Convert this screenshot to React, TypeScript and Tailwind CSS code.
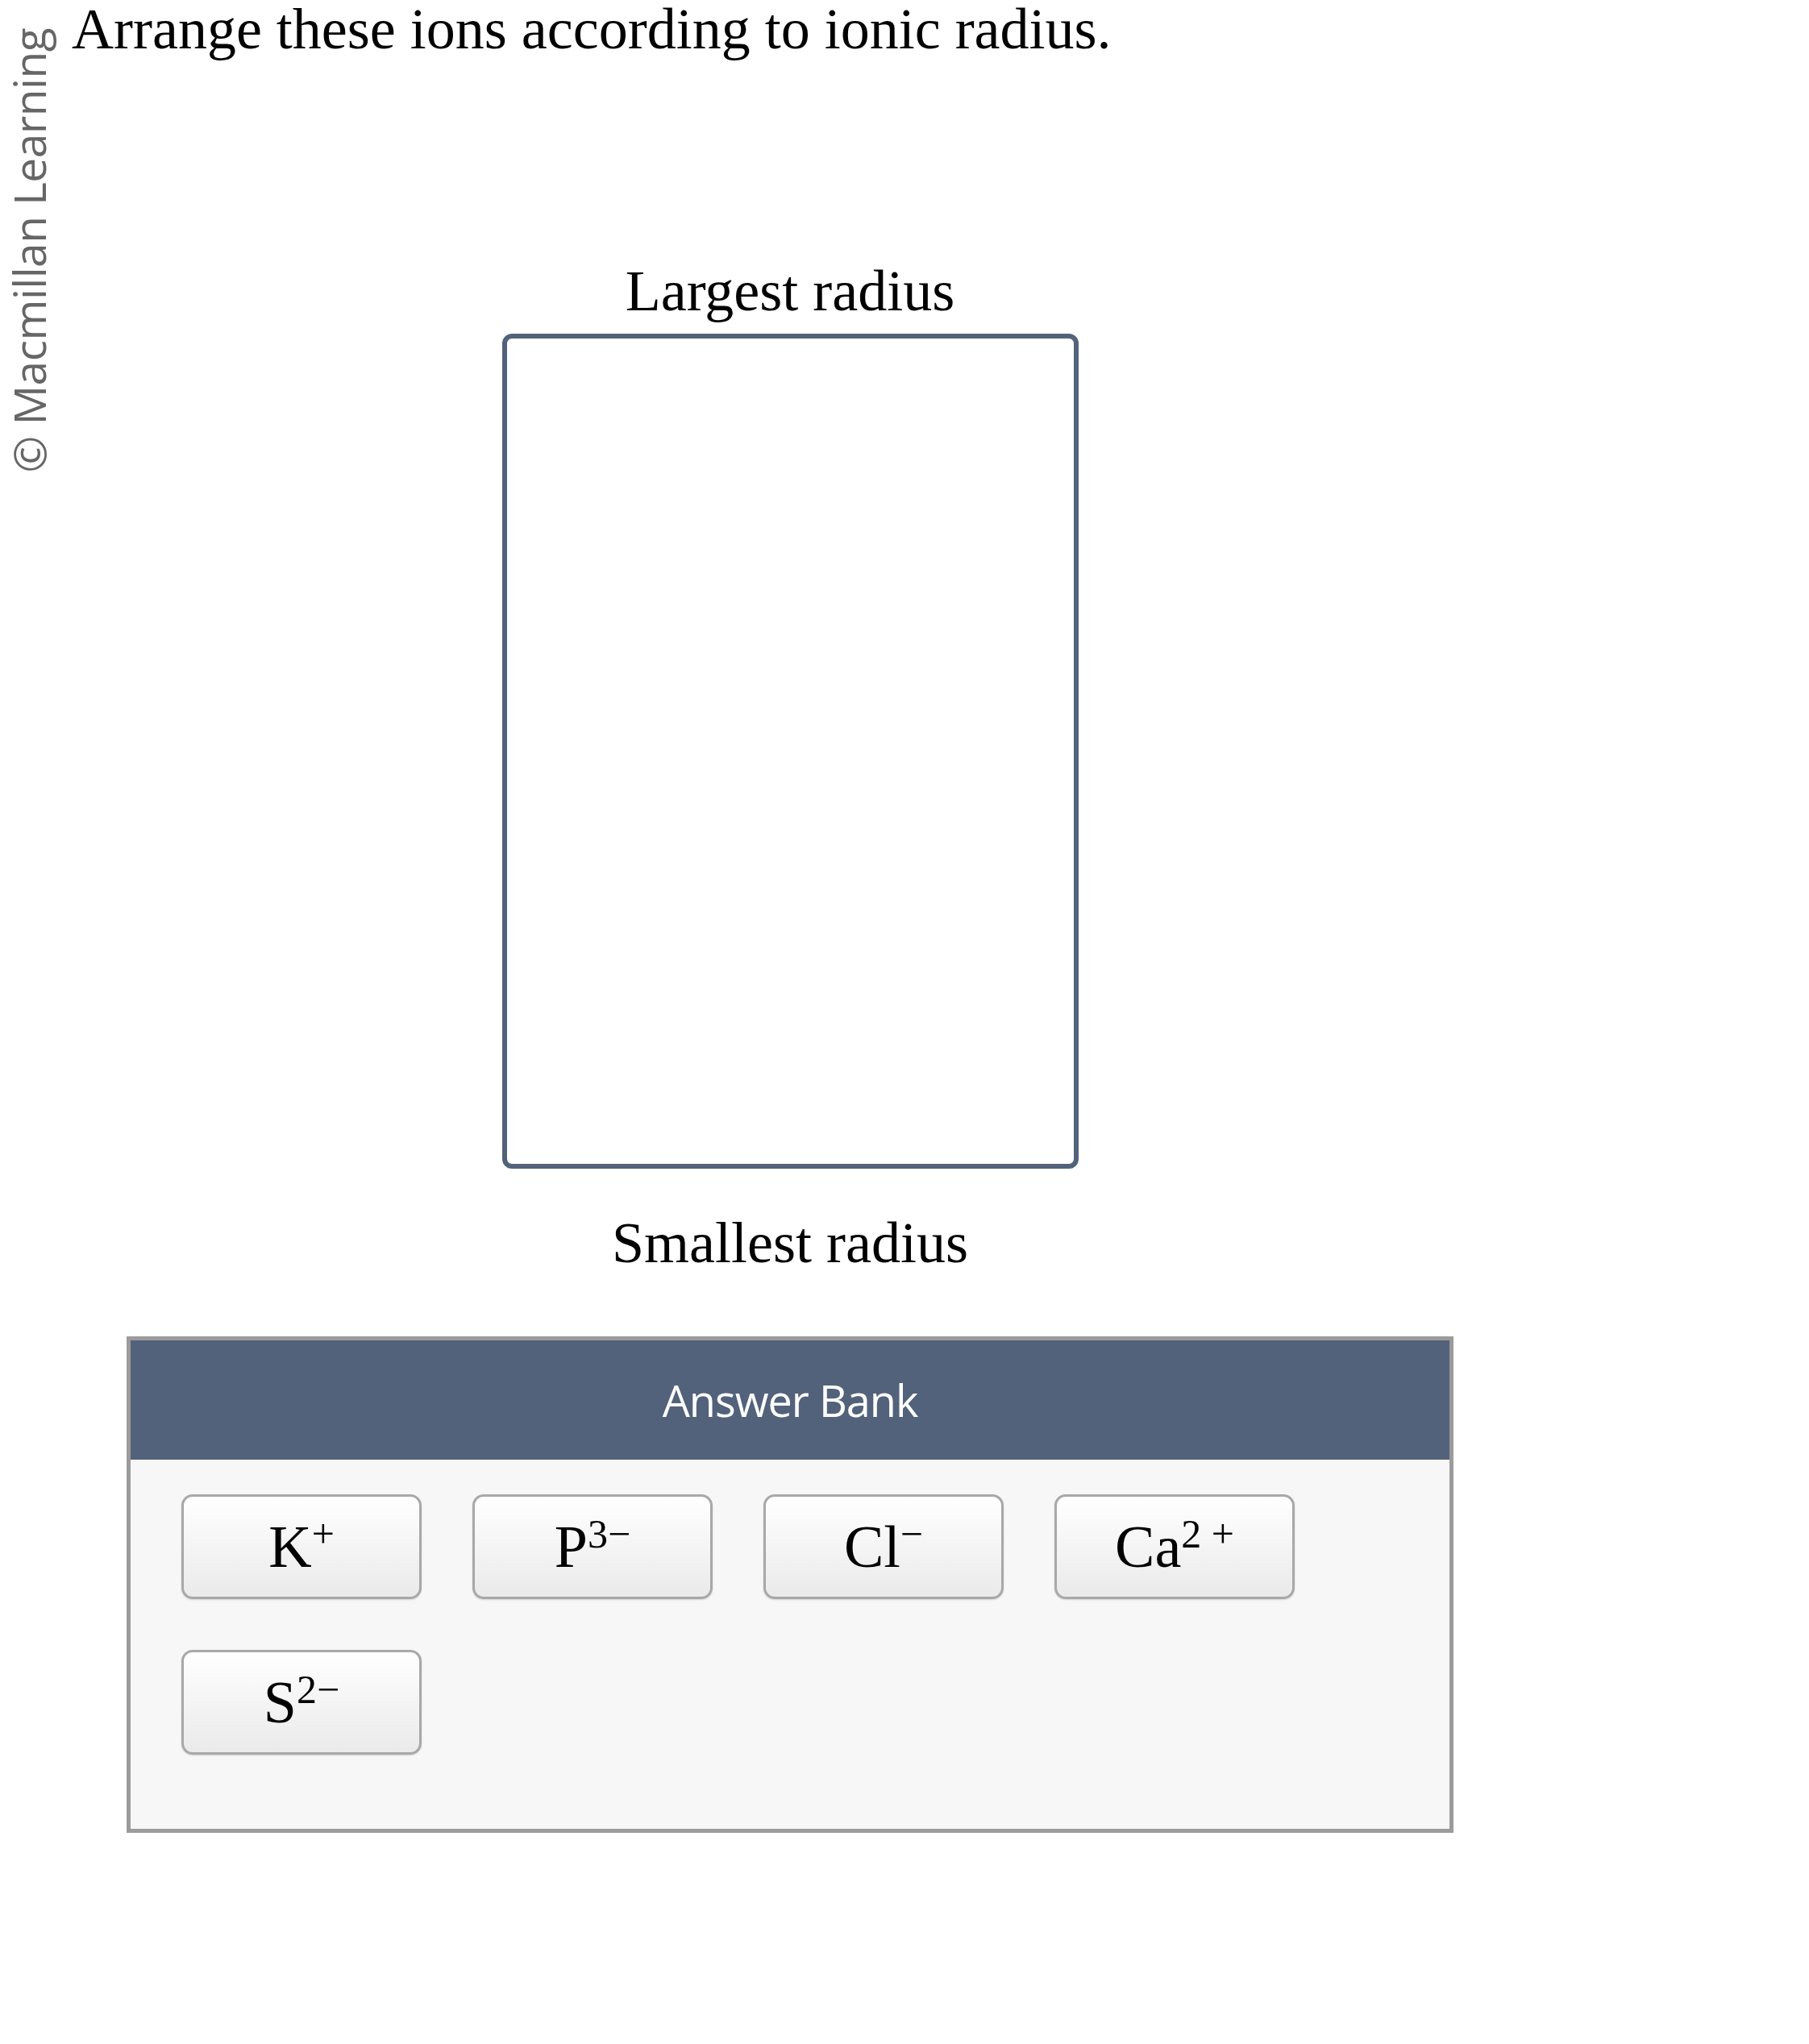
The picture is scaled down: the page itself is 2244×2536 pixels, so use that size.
import React from 'react';

type Ion = { symbol: string; charge: string };

const ions: Ion[] = [
  { symbol: 'K', charge: '+' },
  { symbol: 'P', charge: '3−' },
  { symbol: 'Cl', charge: '−' },
  { symbol: 'Ca', charge: '2 +' },
  { symbol: 'S', charge: '2−' },
];

const serif = 'font-["Liberation_Serif","Times_New_Roman",serif]';

const IonTile: React.FC<{ ion: Ion }> = ({ ion }) => (
  <div className="flex h-[130px] w-[298px] items-center justify-center rounded-[14px] border-[3px] border-[#a8a8a8] bg-gradient-to-b from-white to-[#eaeaea] shadow-[0_1px_2px_rgba(0,0,0,0.15)]">
    <span className={`${serif} text-[74px] leading-none text-black`}>
      {ion.symbol}
      <span className="relative top-[-24px] text-[50px] leading-none">{ion.charge}</span>
    </span>
  </div>
);

export default function App() {
  return (
    <div className="flex min-h-[2536px] w-[2244px] bg-white">
      <div className="w-[89px] shrink-0 pl-[8px] pt-[35px]">
        <span className="block rotate-180 font-['Open_Sans',sans-serif] text-[55px] leading-none tracking-[-0.5px] text-[#666666] [text-orientation:sideways] [writing-mode:vertical-rl]">
          © Macmillan Learning
        </span>
      </div>

      <div className="flex-1">
        <p className={`${serif} text-[72px] leading-none text-black`}>
          Arrange these ions according to ionic radius.
        </p>

        <div className="ml-[68px] flex w-[1646px] flex-col items-center">
          <p className={`${serif} mt-[253px] text-[72px] leading-none text-black`}>Largest radius</p>
          <div className="mt-[17px] h-[1036px] w-[715px] rounded-[12px] border-[6px] border-[#52627a] bg-white" />
          <p className={`${serif} mt-[56px] text-[72px] leading-none text-black`}>Smallest radius</p>

          <div className="mt-[80px] w-full border-[5px] border-[#9b9b9b] bg-[#f7f7f7]">
            <div className="flex h-[148px] items-center justify-center bg-[#52627a]">
              <span className="font-['Open_Sans',sans-serif] text-[54px] tracking-[-1px] text-white">Answer Bank</span>
            </div>
            <div className="flex flex-wrap gap-[63px] pb-[92px] pl-[63px] pr-[63px] pt-[43px]">
              {ions.map((ion) => (
                <IonTile key={ion.symbol} ion={ion} />
              ))}
            </div>
          </div>
        </div>
      </div>
    </div>
  );
}
